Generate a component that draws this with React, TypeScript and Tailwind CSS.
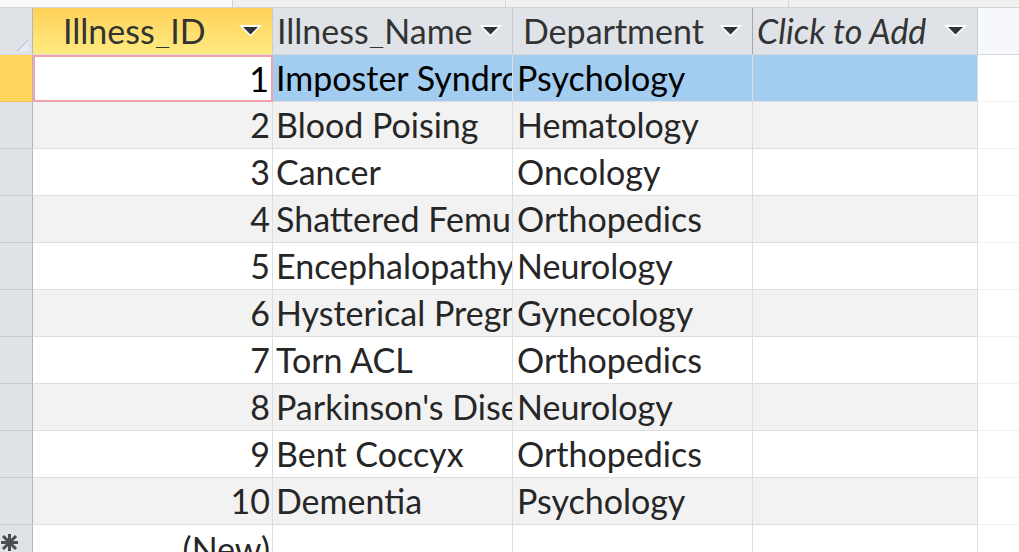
import React from 'react'

const rows = [
  {id: 1, name: 'Imposter Syndrome', dept: 'Psychology'},
  {id: 2, name: 'Blood Poising', dept: 'Hematology'},
  {id: 3, name: 'Cancer', dept: 'Oncology'},
  {id: 4, name: 'Shattered Femur', dept: 'Orthopedics'},
  {id: 5, name: 'Encephalopathy', dept: 'Neurology'},
  {id: 6, name: 'Hysterical Pregnancy', dept: 'Gynecology'},
  {id: 7, name: 'Torn ACL', dept: 'Orthopedics'},
  {id: 8, name: "Parkinson's Disease", dept: 'Neurology'},
  {id: 9, name: 'Bent Coccyx', dept: 'Orthopedics'},
  {id: 10, name: 'Dementia', dept: 'Psychology'},
]

function SortArrow() {
  return (
    <svg width="23" height="12" viewBox="0 0 23 12" className="shrink-0">
      <polygon points="0,0 23,0 11.5,11.5" fill="#ffffff" />
      <polygon points="4,2 19,2 11.5,9.5" fill="#2f3338" />
    </svg>
  )
}

function HeaderCell({label, width, italic, selected, padLeft, dark}:{label:string, width:string, italic?:boolean, selected?:boolean, padLeft?:string, dark?:boolean}) {
  return (
    <div
      className={`${width} h-full shrink-0 flex items-center gap-[2px] border-r ${dark ? 'border-[#a5a9ae]' : 'border-[#c8ccd1]'} ${selected ? 'bg-gradient-to-b from-[#fdd159] to-[#ffeb80]' : 'bg-[#dfe3e8]'} ${padLeft ?? 'pl-[4px]'} pr-[10px]`}
    >
      <span className={`flex-1 min-w-0 whitespace-nowrap overflow-hidden text-[#333333] ${italic ? 'italic' : ''}`}>{label}</span>
      <SortArrow />
    </div>
  )
}

export default function App() {
  return (
    <div className="w-[1019px] h-[552px] overflow-hidden bg-white text-[34px] leading-none" style={{fontFamily: 'Lato, "Open Sans", sans-serif'}}>
      {/* ribbon strip */}
      <div className="flex h-[8px] border-b border-[#d2d2d2] bg-[#f0f0f0]">
        <div className="w-[233px] bg-[#fafafa] border-r border-[#d0d0d0]" />
        <div className="w-[273px] border-r border-[#d6d6d6]" />
        <div className="w-[283px] border-r border-[#d6d6d6]" />
        <div className="flex-1" />
      </div>

      {/* header */}
      <div className="flex h-[47px] border-b border-[#d5d8dc]">
        <div className="w-[33px] h-full shrink-0 bg-[#dfe3e8] border-r border-[#b3b7bd] flex items-end justify-end pr-[4px] pb-[3px]">
          <svg width="11" height="11" viewBox="0 0 11 11">
            <defs>
              <linearGradient id="corner" x1="0" y1="0" x2="1" y2="1">
                <stop offset="0" stopColor="#c9d6e6" />
                <stop offset="1" stopColor="#f2f5f9" />
              </linearGradient>
            </defs>
            <polygon points="11,0 11,11 0,11" fill="url(#corner)" />
            <line x1="11" y1="0" x2="0" y2="11" stroke="#a9bdd6" strokeWidth="1" />
          </svg>
        </div>
        <HeaderCell label="Illness_ID" width="w-[240px]" selected padLeft="pl-[30px]" />
        <HeaderCell label="Illness_Name" width="w-[240px]" />
        <HeaderCell label="Department" width="w-[240px]" padLeft="pl-[10px]" dark />
        <HeaderCell label="Click to Add" width="w-[225px]" italic />
        <div className="flex-1 h-full bg-[#f7f7fe]" />
      </div>

      {/* body */}
      {rows.map((r, i) => {
        const sel = i === 0
        const band = sel ? 'bg-[#a3cdf0]' : i % 2 === 1 ? 'bg-[#f2f2f2]' : 'bg-white'
        const txt = sel ? 'text-black' : 'text-[#262626]'
        return (
          <div key={r.id} className="flex h-[47px]">
            <div className={`w-[33px] shrink-0 border-r border-[#b3b7bd] border-b ${sel ? 'bg-[#ffd65b] border-b-[#f2c94c]' : 'bg-[#dfe3e8] border-b-[#c6cacf]'}`} />
            <div className={`w-[240px] shrink-0 flex items-center justify-end pr-[2px] ${sel ? 'bg-white border-2 border-[#f3a4aa]' : `${band} border-r border-b border-[#dedede]`} ${txt}`}>
              {r.id}
            </div>
            <div className={`w-[240px] shrink-0 flex items-center pl-[3px] overflow-hidden whitespace-nowrap border-r border-b border-[#dedede] ${band} ${txt}`}>
              {r.name}
            </div>
            <div className={`w-[240px] shrink-0 flex items-center pl-[4px] overflow-hidden whitespace-nowrap border-r border-b border-[#dedede] ${band} ${txt}`}>
              {r.dept}
            </div>
            <div className={`w-[225px] shrink-0 border-r border-b border-[#dedede] ${band}`} />
            <div className="flex-1 border-b border-[#f0f0f0] bg-white" />
          </div>
        )
      })}

      {/* new record row */}
      <div className="flex h-[47px]">
        <div className="w-[33px] shrink-0 bg-[#dfe3e8] border-r border-[#b3b7bd] flex items-start pt-[9px] pl-[1px]">
          <svg width="17" height="17" viewBox="0 0 17 17">
            <g stroke="#4a4d52" strokeWidth="3">
              <line x1="8.5" y1="0" x2="8.5" y2="17" />
              <line x1="0" y1="8.5" x2="17" y2="8.5" />
              <line x1="2" y1="2" x2="15" y2="15" />
              <line x1="15" y1="2" x2="2" y2="15" />
            </g>
          </svg>
        </div>
        <div className="w-[240px] shrink-0 flex items-center justify-end pr-[2px] border-r border-[#dedede] text-[#262626]">(New)</div>
        <div className="w-[240px] shrink-0 border-r border-[#dedede]" />
        <div className="w-[240px] shrink-0 border-r border-[#dedede]" />
        <div className="w-[225px] shrink-0 border-r border-[#dedede]" />
        <div className="flex-1" />
      </div>
    </div>
  )
}
